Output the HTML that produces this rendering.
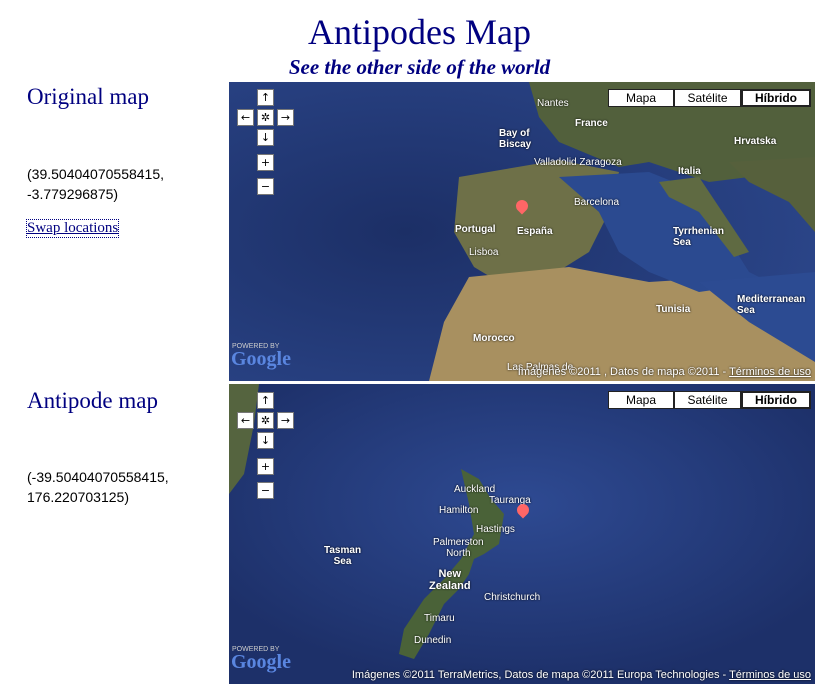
<!DOCTYPE html>
<html><head><meta charset="utf-8"><style>
body{margin:0;background:#fff;font-family:"Liberation Serif",serif;width:833px;height:700px;overflow:hidden;position:relative}
.a{position:absolute}
h1{position:absolute;margin:0;left:0;width:839px;text-align:center;top:11px;font-size:36px;font-weight:normal;color:#000080}
.sub{left:0;width:839px;text-align:center;top:55px;font-size:21px;font-style:italic;font-weight:bold;color:#000080}
.h2{font-size:23px;color:#000080;left:27px}
.coord{font-family:"Liberation Sans",sans-serif;font-size:14px;color:#000;left:27px;line-height:20px}
.map{position:absolute;left:229px;width:586px;height:300px;overflow:hidden;background:#1e3570}
.btn{position:absolute;background:#fff;border:1px solid #222;font:12px "Liberation Sans",sans-serif;text-align:center;height:16px;line-height:16px;top:7px}
.c{position:absolute;width:15px;height:15px;background:#fff;border:1px solid #777;font:11px "DejaVu Sans",sans-serif;text-align:center;line-height:15px;color:#000}
.lb{position:absolute;font:bold 10px "Liberation Sans",sans-serif;color:#fff;text-shadow:0 0 2px #000}
.lt{position:absolute;font:10px "Liberation Sans",sans-serif;color:#fff;text-shadow:0 0 2px #000}
.foot{position:absolute;right:4px;bottom:3px;font:11px "Liberation Sans",sans-serif;color:#fff;text-shadow:0 0 2px #000}
.g{position:absolute;left:2px;bottom:10px;font:bold 20px "Liberation Serif",serif;color:#5a86e0}
.pw{position:absolute;left:3px;bottom:31px;font:7px "Liberation Sans",sans-serif;color:#ccc}
</style></head><body>
<h1>Antipodes Map</h1>
<div class="a sub">See the other side of the world</div>
<div class="a h2" style="top:84px">Original map</div>
<div class="a coord" style="top:164px">(39.50404070558415,<br>-3.779296875)</div>
<div class="a" style="left:27px;top:220px;font-size:15px;color:#000080;text-decoration:underline;outline:1px dotted #000080">Swap locations</div>
<div class="a h2" style="top:388px">Antipode map</div>
<div class="a coord" style="top:467px">(-39.50404070558415,<br>176.220703125)</div>

<div class="map" style="top:82px;height:299px">
<svg width="586" height="299" class="a" style="left:0;top:0">
<defs><radialGradient id="o1" cx="30%" cy="50%" r="70%"><stop offset="0" stop-color="#1c2f66"/><stop offset="1" stop-color="#2a4487"/></radialGradient></defs>
<rect width="586" height="299" fill="url(#o1)"/>
<polygon points="300,0 586,0 586,90 520,95 480,100 420,80 390,85 330,60 310,35" fill="#52603c"/>
<polygon points="230,95 330,78 390,90 380,130 360,170 320,195 270,200 245,185 225,150" fill="#6e7048"/>
<polygon points="240,195 340,185 420,200 500,195 586,210 586,299 200,299 215,240" fill="#a89060"/>
<polygon points="330,95 420,90 470,110 520,190 540,200 470,210 420,190 390,170 370,130" fill="#2b4a90"/>
<polygon points="430,100 470,95 500,140 520,170 505,175 470,130 440,115" fill="#5f6a42"/>
<polygon points="500,80 586,75 586,150 560,120 520,100" fill="#56603c"/>
<polygon points="470,200 586,190 586,280 520,240" fill="#2c4b92"/>
</svg>
<div class="c" style="left:28px;top:7px">↑</div>
<div class="c" style="left:8px;top:27px">←</div>
<div class="c" style="left:28px;top:27px">✲</div>
<div class="c" style="left:48px;top:27px">→</div>
<div class="c" style="left:28px;top:47px">↓</div>
<div class="c" style="left:28px;top:72px">+</div>
<div class="c" style="left:28px;top:96px">−</div>
<div class="btn" style="left:379px;width:64px">Mapa</div>
<div class="btn" style="left:445px;width:65px">Satélite</div>
<div class="btn" style="left:512px;width:66px;font-weight:bold;border-width:2px;height:14px;line-height:14px">Híbrido</div>
<div class="lb" style="left:346px;top:36px">France</div>
<div class="lb" style="left:226px;top:142px">Portugal</div>
<div class="lb" style="left:288px;top:144px">España</div>
<div class="lb" style="left:449px;top:84px">Italia</div>
<div class="lb" style="left:505px;top:54px">Hrvatska</div>
<div class="lb" style="left:244px;top:251px">Morocco</div>
<div class="lb" style="left:427px;top:222px">Tunisia</div>
<div class="lb" style="left:444px;top:144px">Tyrrhenian<br>Sea</div>
<div class="lb" style="left:508px;top:212px">Mediterranean<br>Sea</div>
<div class="lb" style="left:270px;top:46px">Bay of<br>Biscay</div>
<div class="lt" style="left:305px;top:75px">Valladolid Zaragoza</div>
<div class="lt" style="left:345px;top:115px">Barcelona</div>
<div class="lt" style="left:240px;top:165px">Lisboa</div>
<div class="lt" style="left:48px;top:280px;left:278px">Las Palmas de</div>
<div class="lt" style="left:308px;top:16px">Nantes</div>
<div style="position:absolute;left:287px;top:118px;width:12px;height:12px;border-radius:50% 50% 50% 0;transform:rotate(-45deg);background:#f66"></div>
<div class="pw">POWERED BY</div><div class="g">Google</div>
<div class="foot">Imágenes ©2011 , Datos de mapa ©2011 - <u>Términos de uso</u></div>
</div>

<div class="map" style="top:384px">
<svg width="586" height="300" class="a" style="left:0;top:0">
<defs><radialGradient id="o2" cx="50%" cy="40%" r="60%"><stop offset="0" stop-color="#2e4a92"/><stop offset="1" stop-color="#1d3069"/></radialGradient></defs>
<rect width="586" height="300" fill="url(#o2)"/>
<polygon points="0,0 30,0 25,40 15,90 0,110" fill="#55643f"/>
<polygon points="232,85 250,95 262,115 275,130 270,160 255,170 245,175 240,190 230,205 215,220 200,250 185,275 170,270 175,245 195,215 215,195 232,175 245,150 240,120" fill="#4a6238"/>
</svg>
<div class="c" style="left:28px;top:8px">↑</div>
<div class="c" style="left:8px;top:28px">←</div>
<div class="c" style="left:28px;top:28px">✲</div>
<div class="c" style="left:48px;top:28px">→</div>
<div class="c" style="left:28px;top:48px">↓</div>
<div class="c" style="left:28px;top:74px">+</div>
<div class="c" style="left:28px;top:98px">−</div>
<div class="btn" style="left:379px;width:64px">Mapa</div>
<div class="btn" style="left:445px;width:65px">Satélite</div>
<div class="btn" style="left:512px;width:66px;font-weight:bold;border-width:2px;height:14px;line-height:14px">Híbrido</div>
<div class="lb" style="left:95px;top:161px;text-align:center">Tasman<br>Sea</div>
<div class="lb" style="left:200px;top:184px;font-size:11px;text-align:center">New<br>Zealand</div>
<div class="lt" style="left:225px;top:100px">Auckland</div>
<div class="lt" style="left:260px;top:111px">Tauranga</div>
<div class="lt" style="left:210px;top:121px">Hamilton</div>
<div class="lt" style="left:247px;top:140px">Hastings</div>
<div class="lt" style="left:204px;top:153px;text-align:center">Palmerston<br>North</div>
<div class="lt" style="left:255px;top:208px">Christchurch</div>
<div class="lt" style="left:195px;top:229px">Timaru</div>
<div class="lt" style="left:185px;top:251px">Dunedin</div>
<div style="position:absolute;left:288px;top:120px;width:12px;height:12px;border-radius:50% 50% 50% 0;transform:rotate(-45deg);background:#f66"></div>
<div class="pw">POWERED BY</div><div class="g">Google</div>
<div class="foot">Imágenes ©2011 TerraMetrics, Datos de mapa ©2011 Europa Technologies - <u>Términos de uso</u></div>
</div>
</body></html>
